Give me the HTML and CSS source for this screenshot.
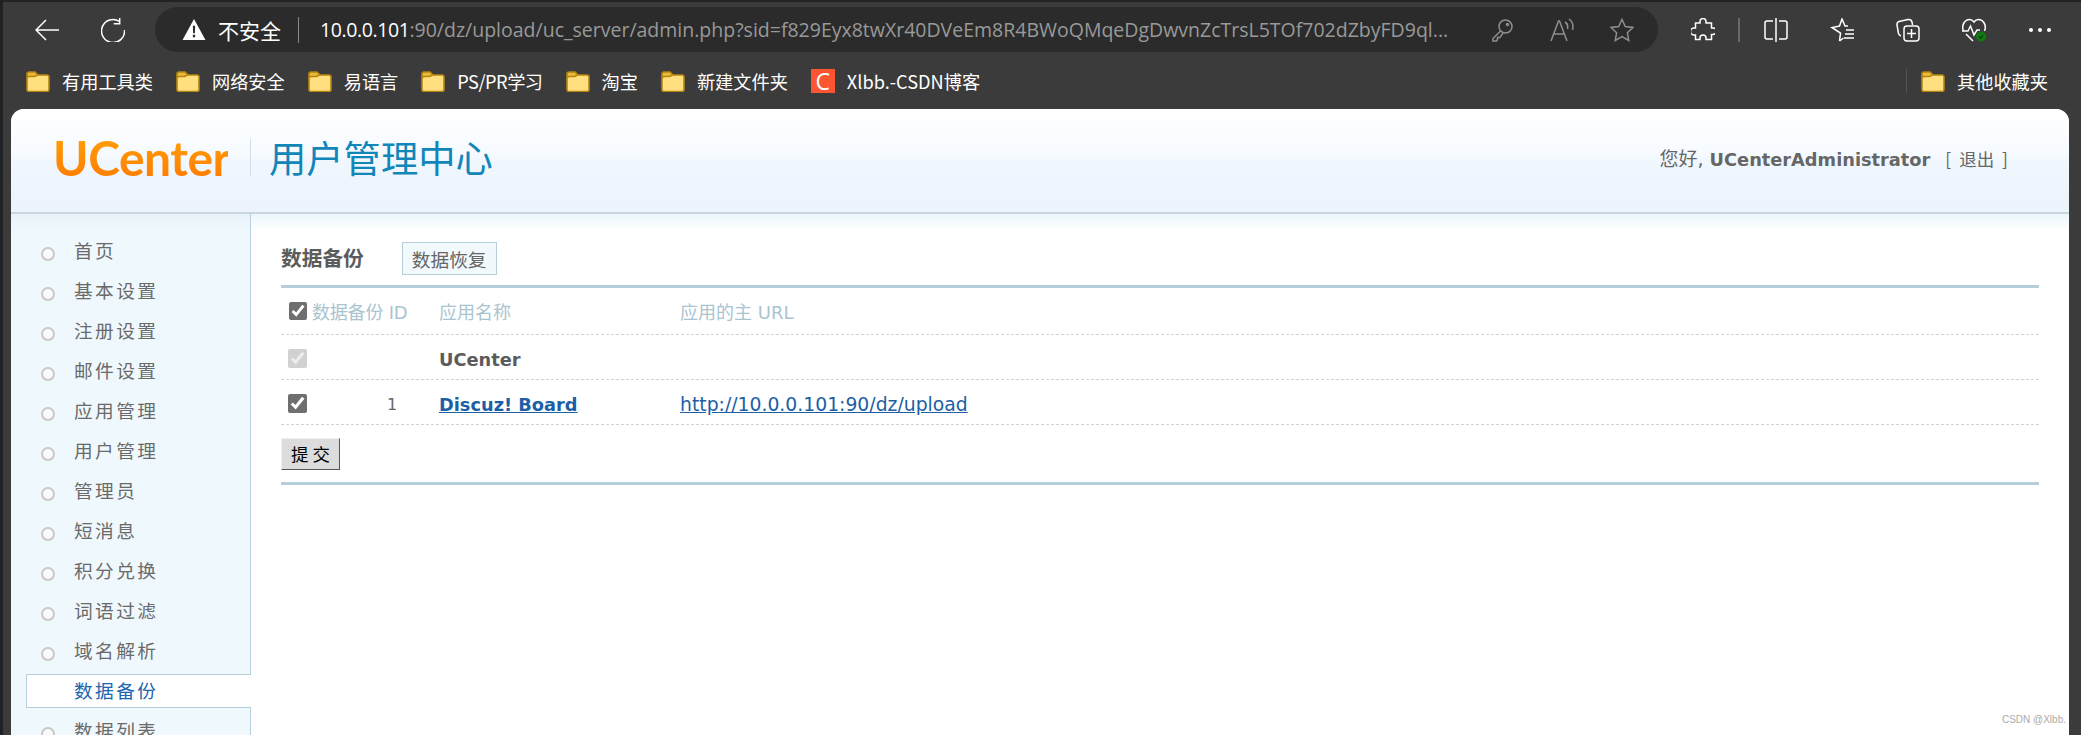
FILE: index.html
```html
<!DOCTYPE html>
<html lang="zh">
<head>
<meta charset="utf-8">
<title>UCenter</title>
<link rel="stylesheet" href="styles.css">
</head>
<body>
<svg class="defs" width="0" height="0" aria-hidden="true">
  <symbol id="folder" viewBox="0 0 24 21">
    <path d="M1 6V3a2 2 0 0 1 2-2h6l3 3v3H1z" fill="#e9b93a" stroke="#b5860f" stroke-width="1.6"/>
    <path d="M1 7.5a2 2 0 0 1 2-2h5.500l3-1.500H21a2 2 0 0 1 2 2v12.500a2 2 0 0 1-2 2H3a2 2 0 0 1-2-2z" fill="#ffdf80" stroke="#b5860f" stroke-width="1.600"/>
  </symbol>
</svg>
<header class="toolbar">
  <svg class="ico back" viewBox="0 0 24 24"><path d="M1 12h23M11 2 1 12l10 10"/></svg>
  <svg class="ico reload" viewBox="0 0 24 24"><path d="M18.500 3.500A11.500 11.500 0 1 0 23.500 12M18.700 0v5.800h-6"/></svg>
  <div class="address">
    <svg class="warn" viewBox="0 0 24 22"><path d="M12 0 24 22H0z" fill="#fff"/><path d="M10.800 7h2.400l-.3 8h-1.800zM10.800 16.500h2.400v2.600h-2.400z" fill="#2b2b2b"/></svg>
    <span class="insecure">不安全</span>
    <span class="addr-sep"></span>
    <span class="url"><b>10.0.0.101</b>:90/dz/upload/uc_server/admin.php?sid=f829Eyx8twXr40DVeEm8R4BWoQMqeDgDwvnZcTrsL5TOf702dZbyFD9ql...</span>
    <svg class="ico dim" viewBox="0 0 24 24"><circle cx="15.500" cy="8.500" r="6.500"/><circle cx="17.500" cy="6.500" r="1" /><path d="M10.500 13 3 20.500V23h3.500l1-1.500v-2h2.500l3-4.500"/></svg>
    <svg class="ico dim" viewBox="0 0 24 24"><path d="M1 23 8.500 3h1L17 23M4 16h11M15 4c2.500 1.500 3 4.500 2.500 7M19 1c3.500 2.500 4.500 7 3.500 11"/></svg>
    <svg class="ico dim" viewBox="0 0 24 24"><path d="m12 1.500 3.300 7 7.700 1-5.600 5.300 1.400 7.700-6.800-3.800-6.800 3.800 1.400-7.700L1 9.500l7.700-1z"/></svg>
  </div>
  <svg class="ico puzzle" viewBox="0 0 24 24"><path d="M9 3.500a3 3 0 0 1 6 0V5h5.500v5H22a3.200 3.200 0 0 1 0 6.400h-1.500v5H15V20a3 3 0 0 0-6 0v1.500H4.500V17H3a3.500 3.500 0 0 1 0-7h1.500V5H9z"/></svg>
  <span class="tool-sep"></span>
  <div class="tools">
    <svg class="ico" viewBox="0 0 24 24"><path d="M9 3H3a2 2 0 0 0-2 2v14a2 2 0 0 0 2 2h6M15 3h6a2 2 0 0 1 2 2v14a2 2 0 0 1-2 2h-6M12 0v24"/></svg>
    <svg class="ico" viewBox="0 0 24 24"><path d="M9.500 23 10.500 15 2 9.500l7.500-1.500L12 1l3 7h3M16 12h8M15 16h9M14 20h10M9.500 23l4-3"/></svg>
    <svg class="ico" viewBox="0 0 24 24"><path d="M5 18c-1.500-.5-2-1-2.500-2.500L1 7c-.3-2 .5-3 2-3.500L12 1.500c2-.3 3.500.5 4 2.500l.5 3"/><rect x="8" y="8" width="15" height="15" rx="3"/><path d="M15.500 11v9M11 15.500h9"/></svg>
    <svg class="ico health" viewBox="0 0 24 24"><path d="M1.500 13C-1 7 3 1.500 7.500 1.500 9.500 1.500 11 2.500 12 4c1-1.500 2.500-2.500 4.500-2.500C21 1.500 25 7 22.500 13"/><path d="M0 13h6l2.500-5 3.500 9 3-5h3M4 16l7 7"/><circle cx="19" cy="18.500" r="5" fill="#107c10" stroke="none"/><path d="m16.800 18.500 1.700 1.600 2.800-3" stroke="#0a3d0a" stroke-width="1.200"/></svg>
    <svg class="ico dots" viewBox="0 0 24 24"><circle cx="3" cy="12" r="2"/><circle cx="12" cy="12" r="2"/><circle cx="21" cy="12" r="2"/></svg>
  </div>
</header>
<nav class="bookmarks">
  <a class="bm"><svg class="folder"><use href="#folder"/></svg>有用工具类</a>
  <a class="bm"><svg class="folder"><use href="#folder"/></svg>网络安全</a>
  <a class="bm"><svg class="folder"><use href="#folder"/></svg>易语言</a>
  <a class="bm bm-tight"><svg class="folder"><use href="#folder"/></svg>PS/PR学习</a>
  <a class="bm"><svg class="folder"><use href="#folder"/></svg>淘宝</a>
  <a class="bm"><svg class="folder"><use href="#folder"/></svg>新建文件夹</a>
  <a class="bm"><span class="csdn">C</span>Xlbb.-CSDN博客</a>
  <span class="bm-sep"></span>
  <a class="bm"><svg class="folder"><use href="#folder"/></svg>其他收藏夹</a>
</nav>
<div class="page">
  <div class="masthead">
    <div class="brand">
      <span class="logo">UCenter</span>
      <span class="brand-sep"></span>
      <span class="brand-title">用户管理中心</span>
    </div>
    <div class="user">您好, <strong>UCenterAdministrator</strong><span class="logout">[ 退出 ]</span></div>
  </div>
  <div class="body">
    <ul class="side">
      <li>首页</li>
      <li>基本设置</li>
      <li>注册设置</li>
      <li>邮件设置</li>
      <li>应用管理</li>
      <li>用户管理</li>
      <li>管理员</li>
      <li>短消息</li>
      <li>积分兑换</li>
      <li>词语过滤</li>
      <li>域名解析</li>
      <li class="active">数据备份</li>
      <li>数据列表</li>
    </ul>
    <main class="content">
      <div class="title-row">
        <h1 class="title">数据备份</h1>
        <a class="tab">数据恢复</a>
      </div>
      <div class="grid">
        <div class="row head">
          <span class="c1"><input type="checkbox" checked class="chk chk-head">数据备份 ID</span>
          <span>应用名称</span>
          <span>应用的主 URL</span>
        </div>
        <div class="row">
          <span class="c1"><input type="checkbox" checked disabled class="chk"></span>
          <strong>UCenter</strong>
          <span></span>
        </div>
        <div class="row">
          <span class="c1"><input type="checkbox" checked class="chk"><span class="num">1</span></span>
          <strong><a class="link">Discuz! Board</a></strong>
          <a class="link url-link">http://10.0.0.101:90/dz/upload</a>
        </div>
      </div>
      <div class="submit-row"><button class="submit" type="button">提 交</button></div>
    </main>
  </div>
</div>
<span class="mark">CSDN @Xlbb.</span>
</body>
</html>
```
FILE: styles.css
```css
* { box-sizing: border-box; }
html, body { margin: 0; height: 735px; overflow: hidden; }
body {
  position: relative;
  background: #3b3b3b;
  border-top: 2px solid #232323;
  border-left: 3px solid #1e2225;
  font-family: "Noto Sans CJK SC", sans-serif;
}
.defs { position: absolute; }
.ico { width: 24px; height: 24px; flex: none; fill: none; stroke: #fff; stroke-width: 1.500; }
.ico.dim { stroke: #8f8f8f; }
.dots { fill: #fff; stroke: none; }

.toolbar { display: flex; align-items: center; height: 45px; margin-top: 5px; padding-left: 32px; }
.reload { margin-left: 42px; }
.address {
  display: flex; align-items: center; gap: 0;
  width: 1503px; height: 45px; margin-left: 30px; padding: 0 24px 0 27px;
  background: #2b2b2b; border-radius: 23px;
}
.warn { width: 24px; height: 21px; flex: none; }
.insecure { margin-left: 12px; width: 64px; color: #fff; font-size: 21px; white-space: nowrap; }
.addr-sep { width: 1px; height: 26px; background: #8a8a8a; margin: 0 21px 0 16px; flex: none; }
.url { width: 1151px; flex: none; color: #999; font: 19.500px "Open Sans", sans-serif; white-space: nowrap; overflow: hidden; }
.url b { color: #fff; font-weight: 400; letter-spacing: -.4px; }
.address .ico { margin-left: 36px; }
.address .url + .ico { margin-left: 19px; }
.puzzle { margin-left: 33px; }
.tool-sep { width: 2px; height: 24px; background: #6a6a6a; margin: 0 24px 0 23px; flex: none; }
.tools { display: flex; gap: 42px; }

.bookmarks { display: flex; align-items: center; gap: 23px; height: 38px; margin-top: 10px; margin-bottom: 9px; padding: 0 33px 0 23px; color: #fff; font-size: 18.200px; }
.bm { display: flex; align-items: center; gap: 12px; white-space: nowrap; }
.bm-tight { letter-spacing: -.5px; }
.folder { width: 24px; height: 21px; flex: none; }
.csdn { width: 24px; height: 24px; display: flex; align-items: center; justify-content: center; background: #fc5531; color: #fff; font: 500 23px/1 "Open Sans", sans-serif; }
.bm-sep { width: 1px; height: 24px; background: #555; margin-left: auto; margin-right: -9px; }

.page { width: 2058px; margin-left: 8px; height: 640px; background: #fff; border-radius: 13px 13px 0 0; overflow: hidden; color: #666; }
.masthead {
  display: flex; align-items: center; justify-content: space-between;
  height: 105px; padding: 0 61px 6px 42px;
  background: linear-gradient(#fff 0%, #f6faff 45%, #f0f7fe 50%, #ebf3fb 100%);
  border-bottom: 2px solid #c9d6df;
}
.brand { display: flex; align-items: center; }
.logo {
  width: 175px; font: 700 48px/1 Lato, sans-serif; letter-spacing: -.5px;
  background: linear-gradient(#ffa10a, #ff7a00); -webkit-background-clip: text; background-clip: text; color: transparent;
}
.brand-sep { width: 1px; height: 37px; background: #cfdfe9; margin: 0 18px 0 22px; }
.brand-title { color: #1186b8; font-size: 37.300px; line-height: 1; white-space: nowrap; }
.user { font: 19px "DejaVu Sans", "Noto Sans CJK SC", sans-serif; color: #666; white-space: nowrap; }
.user strong { font-size: 17.800px; }
.logout { margin-left: 15px; font-family: "Noto Sans CJK SC", sans-serif; font-size: 17.500px; word-spacing: 4px; }

.body { display: flex; height: 540px; background: linear-gradient(#ebf6fa, #fff 16px) ; }
.side {
  width: 240px; flex: none; margin: 0; padding: 20px 0 0 15px; list-style: none;
  background: #eff8fd; border-right: 1px solid #b5ced9;
  background-image: linear-gradient(#e8f3f9, #eff8fd 20px);
}
.side li {
  position: relative; height: 34px; margin-bottom: 6px; padding-left: 48px;
  font-size: 18.700px; line-height: 32px; letter-spacing: 2.400px; color: #6a6a6a;
}
.side li::before {
  content: ""; position: absolute; left: 15px; top: 13px;
  width: 10px; height: 10px; border: 2px solid #c8c8c8; border-radius: 50%; background: #fafafa;
}
.side .active {
  width: 225px; color: #1a66b0; background: #fff;
  border: 1px solid #b5ced9; border-right: 0; padding-left: 47px; line-height: 30px;
}
.side .active::before { display: none; }

.content { flex: 1; padding: 28px 30px 0 30px; font: 18px "DejaVu Sans", "Noto Sans CJK SC", sans-serif; }
.title-row { display: flex; align-items: flex-start; height: 33px; }
.title { margin: 2px 38px 0 0; font: 700 20.700px/1.300 "Noto Sans CJK SC", sans-serif; color: #5c5c5c; }
.tab { height: 33px; padding: 0 9px; border: 1px solid #b5ced9; background: #f2f9fd; color: #666; font: 18.700px/31px "Noto Sans CJK SC", sans-serif; white-space: nowrap; }
.grid { margin-top: 10px; border-top: 3px solid #b5ced9; }
.row { display: grid; grid-template-columns: 158px 241px 1fr; align-items: center; height: 45px; border-bottom: 1px dashed #d2d2d2; }
.row:not(.head) { padding-top: 4px; }
.row:first-child { height: 47px; }
.head { color: #a9c4d0; }
.c1 { display: flex; align-items: center; }
.chk { width: 18px; height: 18px; margin: 0 0 0 8px; accent-color: #6f6f6f; flex: none; }
.head .chk { margin-right: 5px; }
.row:not(.head) .chk { width: 19px; height: 19px; margin: -2px 0 0 7px; }
.head .c1 { white-space: nowrap; letter-spacing: -.2px; }
.num { margin-left: 80px; font-size: 16px; }
.row strong { color: #5c5c5c; font-size: 17.800px; }
.link { color: #1c5fa5; text-decoration: underline; }
.url-link { font-size: 18.800px; }
.submit-row { height: 60px; padding-top: 13px; border-bottom: 3px solid #b5ced9; }
.submit {
  display: block; width: 59px; height: 32px; padding: 0;
  background: #dcdcdc; color: #000; font: 17.500px/1 "Noto Sans CJK SC", sans-serif;
  border: 1px solid; border-color: #f0f0f0 #555 #555 #f0f0f0; border-radius: 0;
}
.mark { position: absolute; right: 15px; top: 712px; font: 10px "Liberation Sans", sans-serif; color: #aaa; white-space: nowrap; }
```
